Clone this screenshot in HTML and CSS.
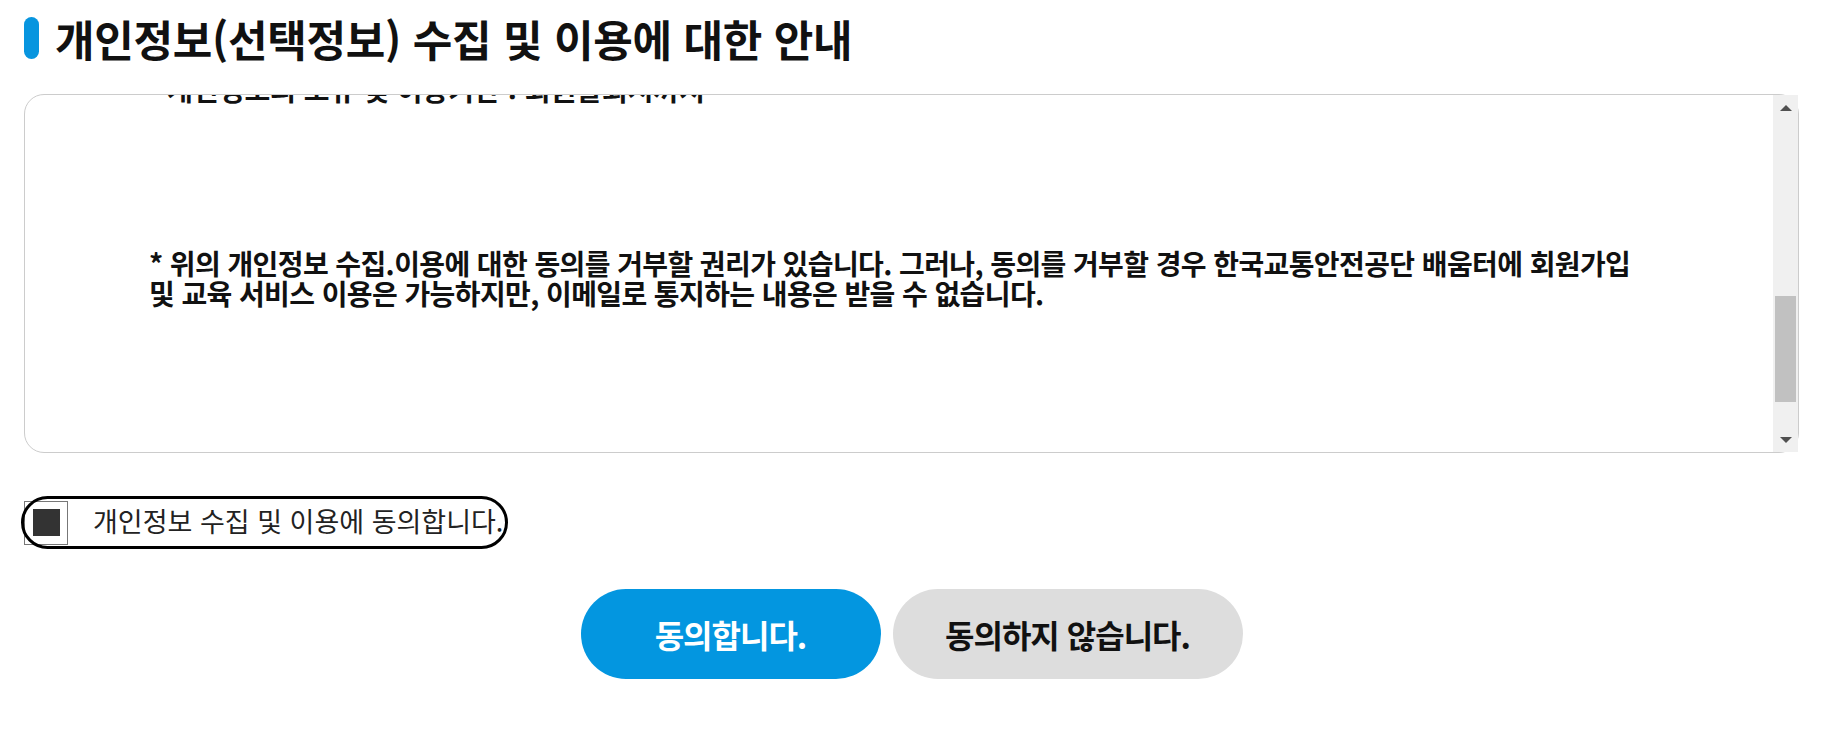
FILE: index.html
```html
<!DOCTYPE html>
<html lang="ko">
<head>
    <meta charset="UTF-8">
    <meta name="viewport" content="width=device-width, initial-scale=1.0">
    <title>개인정보 수집 및 이용 동의</title>
    <link rel="stylesheet" href="styles.css">
</head>
<body>
    <main class="agree-wrap">
        <h2 class="sec-title"><span class="sec-bar"></span>개인정보(선택정보) 수집 및 이용에 대한 안내</h2>

        <div class="terms-box">
            <div class="terms-body">
                <div class="terms-inner">
                    <p class="terms-line">- 개인정보의 보유 및 이용기간 : 회원탈퇴시까지</p>
                    <p class="terms-note">* 위의 개인정보 수집.이용에 대한 동의를 거부할 권리가 있습니다. 그러나, 동의를 거부할 경우 한국교통안전공단 배움터에 회원가입<br>및 교육 서비스 이용은 가능하지만, 이메일로 통지하는 내용은 받을 수 없습니다.</p>
                </div>
            </div>
            <div class="scrollbar">
                <span class="sb-btn sb-up"></span>
                <div class="sb-track"><span class="sb-thumb"></span></div>
                <span class="sb-btn sb-down"></span>
            </div>
        </div>

        <div class="agree-row">
            <label class="agree-check">
                <span class="check-box"><span class="check-mark"></span></span>
                <span class="check-text">개인정보 수집 및 이용에 동의합니다.</span>
            </label>
        </div>

        <div class="btn-row">
            <button class="btn btn-agree">동의합니다.</button>
            <button class="btn btn-deny">동의하지 않습니다.</button>
        </div>
    </main>
</body>
</html>
```

FILE: styles.css
```css
body {
    margin: 0;
    background: #fff;
    color: #111;
    font-family: "Noto Sans CJK KR", "Noto Sans", sans-serif;
}
.agree-wrap {
    padding: 0 26px 0 24px;
}
.sec-title {
    display: flex;
    align-items: center;
    gap: 16px;
    margin: 0;
    padding-top: 12px;
    font-size: 43px;
    font-weight: 700;
    line-height: 52px;
    letter-spacing: -0.3px;
    color: #111;
}
.sec-bar {
    width: 15px;
    height: 42px;
    border-radius: 8px;
    background: #0795df;
}

/* 약관 스크롤 박스 */
.terms-box {
    display: flex;
    height: 357px;
    margin-top: 30px;
    border: 1px solid #ccc;
    border-radius: 20px;
}
.terms-body {
    flex: 1;
    overflow: hidden;
    padding-left: 124px;
}
.terms-inner {
    margin-top: -24px;
}
.terms-line {
    margin: 0;
    font-size: 28px;
    font-weight: 700;
    line-height: 36px;
}
.terms-note {
    margin: 141px 0 0;
    font-size: 28px;
    font-weight: 700;
    line-height: 30px;
    letter-spacing: -0.6px;
}
.scrollbar {
    display: flex;
    flex-direction: column;
    width: 25px;
    background: #f0f0f0;
}
.sb-btn {
    display: flex;
    align-items: center;
    justify-content: center;
    height: 25px;
}
.sb-up::before,
.sb-down::before {
    content: "";
    border-left: 6px solid transparent;
    border-right: 6px solid transparent;
}
.sb-up::before {
    border-bottom: 6px solid #505050;
}
.sb-down::before {
    border-top: 6px solid #505050;
}
.sb-track {
    flex: 1;
}
.sb-thumb {
    display: block;
    height: 106px;
    margin: 176px 2px 0;
    background: #c1c1c1;
}

/* 동의 체크 */
.agree-row {
    display: flex;
    margin-top: 46px;
}
.agree-check {
    display: inline-flex;
    align-items: center;
    gap: 25px;
    padding-right: 2px;
    outline: 3px solid #000;
    border-radius: 24px;
    cursor: pointer;
}
.check-box {
    display: flex;
    align-items: center;
    justify-content: center;
    width: 42px;
    height: 42px;
    border: 1px solid #777;
    background: #fff;
}
.check-mark {
    width: 27px;
    height: 27px;
    background: #333;
}
.check-text {
    font-size: 27px;
    line-height: 44px;
    color: #222;
    padding-bottom: 3px;
}

/* 버튼 */
.btn-row {
    display: flex;
    justify-content: center;
    gap: 12px;
    margin-top: 43px;
}
.btn {
    height: 90px;
    border: 0;
    border-radius: 45px;
    font-family: inherit;
    font-size: 32px;
    font-weight: 700;
    letter-spacing: -1px;
    cursor: pointer;
}
.btn-agree {
    width: 300px;
    background: #0396e0;
    color: #fff;
}
.btn-deny {
    width: 350px;
    background: #ddd;
    color: #111;
}
```
